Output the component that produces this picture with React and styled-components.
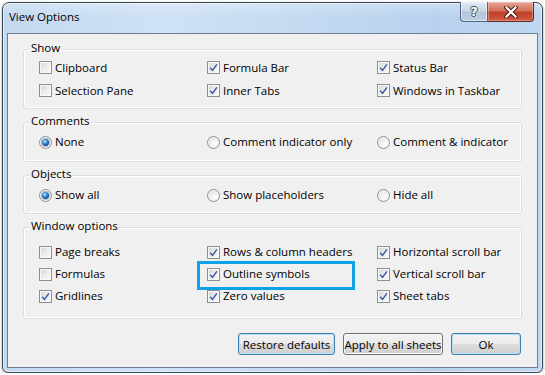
import React from "react";
import styled, { createGlobalStyle, css } from "styled-components";

const GlobalStyle = createGlobalStyle`
  html, body { margin: 0; padding: 0; background: #ffffff; }
  body { font-family: "Open Sans", "Noto Sans", sans-serif; font-size: 11.5px; color: #000; }
  * { box-sizing: border-box; }
`;

const Window = styled.div`
  width: 541px;
  height: 371px;
  margin: 2px 0 0 2px;
  border: 1px solid #3b4654;
  border-radius: 7px 7px 6px 6px;
  background:
    linear-gradient(180deg, rgba(255,255,255,0.25) 0px, rgba(255,255,255,0) 14px),
    linear-gradient(90deg, #c3d9f0 0%, #cfe2f6 30%, #c4daf1 55%, #b8d2ee 80%, #bfd7f0 100%);
  box-shadow: 0 0 0 1px rgba(255,255,255,0.55) inset, 0 1px 3px rgba(0,0,0,0.35);
  padding: 0 4px 4px 4px;
  display: flex;
  flex-direction: column;
`;

const TitleBar = styled.div`
  height: 30px;
  display: flex;
  justify-content: space-between;
  align-items: flex-start;
`;

const Title = styled.span`
  margin: 6px 0 0 2px;
  line-height: 15px;
  font-size: 11.5px;
  color: #000;
`;

const Captions = styled.div`
  display: flex;
  margin: -1px 4px 0 0;
`;

const CapButton = styled.div`
  height: 20px;
  width: ${(p) => p.$w}px;
  display: flex;
  align-items: center;
  justify-content: center;
  border: 1px solid ${(p) => (p.$close ? "#5e2a22" : "#52657a")};
  border-top: none;
  ${(p) =>
    p.$close
      ? css`
          border-radius: 0 0 4px 0;
          border-left: none;
          background: linear-gradient(180deg, #e6a596 0%, #d4705c 45%, #c1412c 55%, #cf5a40 100%);
          box-shadow: inset 0 0 0 1px rgba(255,255,255,0.3);
        `
      : css`
          border-radius: 0 0 0 4px;
          background: linear-gradient(180deg, #e2ebf5 0%, #cbd8e6 45%, #b4c5d8 55%, #bdd0e4 100%);
          box-shadow: inset 0 0 0 1px rgba(255,255,255,0.45);
        `}
`;

const HelpGlyph = styled.span`
  font-family: "DejaVu Sans", sans-serif;
  font-weight: bold;
  font-size: 13px;
  line-height: 13px;
  color: #ffffff;
  text-shadow: -1px 0 #3c4d60, 1px 0 #3c4d60, 0 -1px #3c4d60, 0 1px #3c4d60;
`;

const Client = styled.div`
  flex: 1;
  border: 1px solid #6e7e90;
  background: #f0f0f0;
  padding: 15px 15px 12px 15px;
  display: flex;
  flex-direction: column;
`;

const Group = styled.div`
  position: relative;
  border: 1px solid #d5dfe5;
  border-radius: 3px;
  box-shadow: inset 0 0 0 1px #ffffff;
  padding: ${(p) => p.$pt}px 0 ${(p) => p.$pb}px 15px;
  margin-bottom: ${(p) => p.$mb}px;
  display: grid;
  grid-template-columns: 168px 170px 1fr;
  grid-auto-rows: ${(p) => p.$row}px;
`;

const GroupLabel = styled.span`
  position: absolute;
  top: -10px;
  left: 6px;
  padding: 0 1px;
  line-height: 15px;
  background: #f0f0f0;
`;

const Item = styled.label`
  position: relative;
  display: flex;
  align-items: center;
  gap: 3px;
  ${(p) =>
    p.$highlight &&
    css`
      &::after {
        content: "";
        position: absolute;
        left: -10px;
        top: -2px;
        width: 152px;
        height: 23px;
        border: 3px solid #0ca2e4;
      }
    `}
`;

const Text = styled.span`
  line-height: 15px;
  padding-bottom: 1px;
  white-space: nowrap;
`;

const Box = styled.span`
  width: 13px;
  height: 13px;
  flex: none;
  border: 1px solid #8e8f8f;
  background: linear-gradient(135deg, #d2d4d8 0%, #eeeeef 55%, #fafafa 100%);
  box-shadow: inset 0 0 0 1px #f8f8f8;
  display: flex;
  align-items: center;
  justify-content: center;
`;

const Radio = styled.span`
  width: 13px;
  height: 13px;
  flex: none;
  border-radius: 50%;
  border: 1px solid #8f9194;
  background: radial-gradient(circle at 65% 65%, #ffffff 0%, #eeeeee 45%, #cfd0d2 100%);
  box-shadow: inset 0 0 0 1px #f6f6f6;
  display: flex;
  align-items: center;
  justify-content: center;
`;

const Dot = styled.span`
  width: 7px;
  height: 7px;
  border-radius: 50%;
  background: radial-gradient(circle at 40% 35%, #c6e4fa 0%, #3e8fd6 35%, #1a5596 65%, #0f3765 100%);
  box-shadow: 0 0 0 1px rgba(40, 80, 130, 0.35);
`;

const ButtonRow = styled.div`
  display: flex;
  justify-content: flex-end;
  gap: 8px;
  padding-right: 1px;
`;

const Button = styled.button`
  width: ${(p) => p.$w}px;
  height: 22px;
  padding: 0;
  font-family: "Open Sans", "Noto Sans", sans-serif;
  font-size: 11.5px;
  line-height: 15px;
  color: #000;
  border-radius: 3px;
  border: 1px solid ${(p) => (p.$default ? "#3c7fb1" : "#707070")};
  background: linear-gradient(180deg, #f2f2f2 0%, #ebebeb 50%, #dddddd 51%, #cfcfcf 100%);
  box-shadow: inset 0 0 0 1px ${(p) => (p.$default ? "#b8e0f6" : "#fcfcfc")};
`;

const Check = () => (
  <svg width="9" height="9" viewBox="0 0 9 9">
    <path d="M1.2 4.8 L3.5 7.4 L7.9 1.3" fill="none" stroke="#3a55a4" strokeWidth="1.45" strokeLinejoin="miter" />
  </svg>
);

const CheckItem = ({ checked, children, highlight }) => (
  <Item $highlight={highlight}>
    <Box>{checked && <Check />}</Box>
    <Text>{children}</Text>
  </Item>
);

const RadioItem = ({ checked, children }) => (
  <Item>
    <Radio>{checked && <Dot />}</Radio>
    <Text>{children}</Text>
  </Item>
);

export default function App() {
  return (
    <>
      <GlobalStyle />
      <Window>
        <TitleBar>
          <Title>View Options</Title>
          <Captions>
            <CapButton $w={28}>
              <HelpGlyph>?</HelpGlyph>
            </CapButton>
            <CapButton $w={46} $close>
              <svg width="14" height="12" viewBox="0 0 14 12">
                <path d="M2.5 1.5 L11.5 10.5 M11.5 1.5 L2.5 10.5" stroke="#4a1c14" strokeWidth="4.2" strokeLinecap="square" />
                <path d="M2.5 1.5 L11.5 10.5 M11.5 1.5 L2.5 10.5" stroke="#ffffff" strokeWidth="2.2" strokeLinecap="square" />
              </svg>
            </CapButton>
          </Captions>
        </TitleBar>
        <Client>
          <Group $pt={6} $pb={6} $row={23} $mb={13}>
            <GroupLabel>Show</GroupLabel>
            <CheckItem>Clipboard</CheckItem>
            <CheckItem checked>Formula Bar</CheckItem>
            <CheckItem checked>Status Bar</CheckItem>
            <CheckItem>Selection Pane</CheckItem>
            <CheckItem checked>Inner Tabs</CheckItem>
            <CheckItem checked>Windows in Taskbar</CheckItem>
          </Group>
          <Group $pt={8} $pb={8} $row={22} $mb={13}>
            <GroupLabel>Comments</GroupLabel>
            <RadioItem checked>None</RadioItem>
            <RadioItem>Comment indicator only</RadioItem>
            <RadioItem>Comment &amp; indicator</RadioItem>
          </Group>
          <Group $pt={8} $pb={7} $row={22} $mb={13}>
            <GroupLabel>Objects</GroupLabel>
            <RadioItem checked>Show all</RadioItem>
            <RadioItem>Show placeholders</RadioItem>
            <RadioItem>Hide all</RadioItem>
          </Group>
          <Group $pt={13} $pb={11} $row={22} $mb={14}>
            <GroupLabel>Window options</GroupLabel>
            <CheckItem>Page breaks</CheckItem>
            <CheckItem checked>Rows &amp; column headers</CheckItem>
            <CheckItem checked>Horizontal scroll bar</CheckItem>
            <CheckItem>Formulas</CheckItem>
            <CheckItem checked highlight>Outline symbols</CheckItem>
            <CheckItem checked>Vertical scroll bar</CheckItem>
            <CheckItem checked>Gridlines</CheckItem>
            <CheckItem checked>Zero values</CheckItem>
            <CheckItem checked>Sheet tabs</CheckItem>
          </Group>
          <ButtonRow>
            <Button $w={97} $default>Restore defaults</Button>
            <Button $w={100}>Apply to all sheets</Button>
            <Button $w={70} $default>Ok</Button>
          </ButtonRow>
        </Client>
      </Window>
    </>
  );
}
